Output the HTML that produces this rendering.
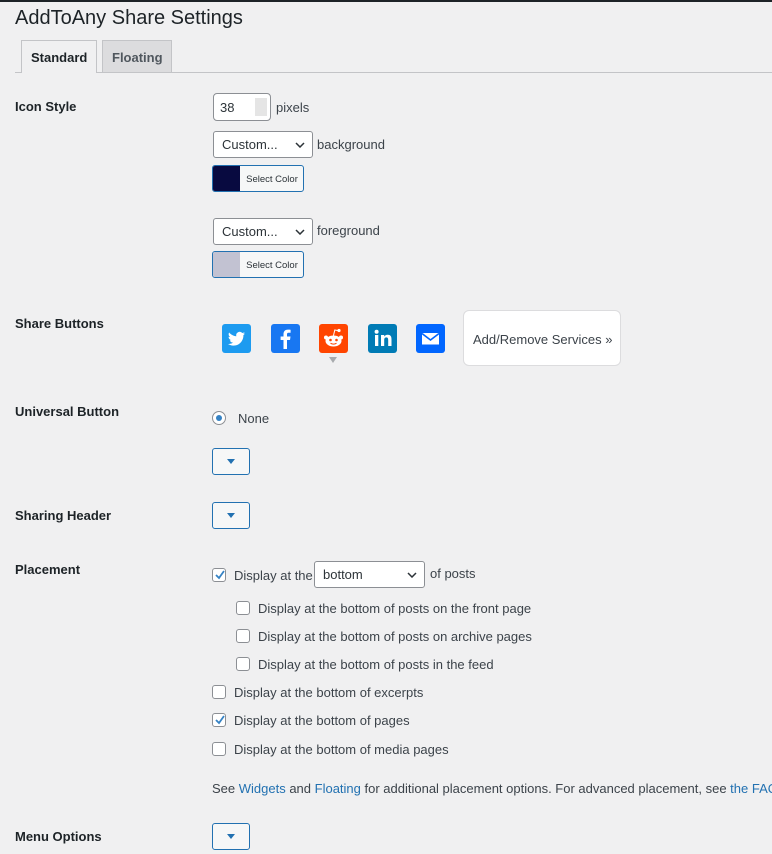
<!DOCTYPE html>
<html><head><meta charset="utf-8"><style>
*{box-sizing:border-box;margin:0;padding:0}
body{width:772px;height:854px;background:#f0f0f1;font-family:"Liberation Sans",sans-serif;color:#3c434a;font-size:13px;position:relative;overflow:hidden}
.a{position:absolute}
.t{position:absolute;font-size:13px;line-height:16px;white-space:nowrap;color:#3c434a;margin-top:1px}
.l{position:absolute;font-size:13px;line-height:16px;font-weight:bold;color:#1d2327;white-space:nowrap;margin-top:1px}
.sel{position:absolute;background:#fff;border:1px solid #8c8f94;border-radius:3px;font-size:13px;line-height:26px;padding-left:8px;color:#2c3338}
.sel svg{position:absolute;right:7px;top:10px}
.cb{position:absolute;width:14px;height:14px;border:1px solid #8c8f94;border-radius:3px;background:#fff}
.cbtn{position:absolute;width:92px;height:27px;border:1px solid #2271b1;border-radius:3px;background:#f6f7f7;overflow:hidden}
.cbtn span{position:absolute;left:28px;top:1px;width:62px;text-align:center;font-size:9.5px;line-height:25px;color:#2c3338}
.dd{position:absolute;width:38px;height:27px;border:1px solid #2271b1;border-radius:3px;background:#f6f7f7}
.dd:after{content:"";position:absolute;left:14px;top:10px;border-left:4px solid transparent;border-right:4px solid transparent;border-top:5px solid #2271b1}
.ic{position:absolute;top:324px;width:29px;height:29px;border-radius:3px}
a{color:#2271b1}
</style></head><body>
<div class="a" style="left:0;top:0;width:772px;height:2px;background:#1d2327"></div>
<div class="t" style="left:15px;top:5px;font-size:20px;line-height:24px;color:#1d2327">AddToAny Share Settings</div>
<div class="a" style="left:15px;top:72px;width:757px;height:1px;background:#c3c4c7"></div>
<div class="a" style="left:21px;top:40px;width:76px;height:33px;border:1px solid #c3c4c7;border-bottom:none;background:#f0f0f1"></div>
<div class="t" style="left:31px;top:49px;color:#1d2327;font-weight:bold">Standard</div>
<div class="a" style="left:102px;top:40px;width:70px;height:32px;border:1px solid #c3c4c7;border-bottom:none;background:#dcdcde"></div>
<div class="t" style="left:112px;top:49px;color:#50575e;font-weight:bold">Floating</div>

<div class="l" style="left:15px;top:98px">Icon Style</div>
<div class="a" style="left:213px;top:93px;width:58px;height:28px;background:#fff;border:1px solid #8c8f94;border-radius:4px"></div>
<div class="t" style="left:220px;top:99px;color:#2c3338">38</div>
<div class="a" style="left:255px;top:98px;width:12px;height:18px;background:#e5e5e5"></div>
<div class="t" style="left:276px;top:99px">pixels</div>
<div class="sel" style="left:213px;top:131px;width:100px;height:27px">Custom...<svg width="10" height="6"><path d="M1 1l4 4 4-4" stroke="#2c3338" stroke-width="1.5" fill="none"/></svg></div>
<div class="t" style="left:317px;top:136px">background</div>
<div class="cbtn" style="left:212px;top:165px"><div class="a" style="left:0;top:0;width:27px;height:27px;background:#080a40"></div><span>Select Color</span></div>
<div class="sel" style="left:213px;top:218px;width:100px;height:27px">Custom...<svg width="10" height="6"><path d="M1 1l4 4 4-4" stroke="#2c3338" stroke-width="1.5" fill="none"/></svg></div>
<div class="t" style="left:317px;top:222px">foreground</div>
<div class="cbtn" style="left:212px;top:251px"><div class="a" style="left:0;top:0;width:27px;height:27px;background:#c2c2d2"></div><span>Select Color</span></div>

<div class="l" style="left:15px;top:315px">Share Buttons</div>
<div class="ic" style="left:222px;background:#1d9bf0"><svg width="29" height="29" viewBox="0 0 29 29"><path d="M23 9.5c-.6.3-1.3.5-2 .6.7-.4 1.3-1.1 1.5-1.9-.7.4-1.4.7-2.2.8a3.5 3.5 0 0 0-6 3.2C11.4 12 8.8 10.6 7.1 8.5c-.9 1.6-.4 3.6 1.1 4.6-.6 0-1.1-.2-1.6-.4 0 1.7 1.2 3.1 2.8 3.4-.5.1-1.1.2-1.6.1.4 1.4 1.7 2.4 3.3 2.4A7 7 0 0 1 6 20c1.6 1 3.4 1.6 5.4 1.6 6.5 0 10.2-5.5 10-10.5.7-.5 1.2-1 1.6-1.6z" fill="#fff"/></svg></div>
<div class="ic" style="left:271px;background:#1877f2"><svg width="29" height="29" viewBox="0 0 29 29"><path d="M16 25v-9h3l.5-3.5H16v-2c0-1 .3-1.7 1.8-1.7h1.8V5.7c-.3 0-1.4-.1-2.7-.1-2.6 0-4.4 1.6-4.4 4.5v2.4H9.6V16h2.9v9z" fill="#fff"/></svg></div>
<div class="ic" style="left:319px;background:#ff4500"><svg width="29" height="29" viewBox="0 0 29 29"><ellipse cx="14.5" cy="17" rx="8" ry="5.5" fill="#fff"/><circle cx="22" cy="13.5" r="2" fill="#fff"/><circle cx="7" cy="13.5" r="2" fill="#fff"/><circle cx="20" cy="6.5" r="1.6" fill="#fff"/><path d="M14.5 11.5l1.3-5.5 4 .8" stroke="#fff" stroke-width="1" fill="none"/><circle cx="11.5" cy="16" r="1.3" fill="#ff4500"/><circle cx="17.5" cy="16" r="1.3" fill="#ff4500"/><path d="M11.5 19.2c1.7 1.2 4.3 1.2 6 0" stroke="#ff4500" stroke-width="1" fill="none"/></svg></div>
<div class="a" style="left:329px;top:357px;border-left:4px solid transparent;border-right:4px solid transparent;border-top:6px solid #a7aaad"></div>
<div class="ic" style="left:368px;background:#007bb5"><svg width="29" height="29" viewBox="0 0 29 29"><rect x="7" y="11" width="3.3" height="11" fill="#fff"/><circle cx="8.6" cy="7.8" r="2" fill="#fff"/><path d="M13 11h3.2v1.6c.5-1 1.7-1.9 3.5-1.9 3.3 0 3.8 2.2 3.8 5V22h-3.3v-5.6c0-1.4-.1-3-1.9-3s-2.1 1.4-2.1 2.9V22H13z" fill="#fff"/></svg></div>
<div class="ic" style="left:416px;background:#0166ff"><svg width="29" height="29" viewBox="0 0 29 29"><rect x="6" y="9" width="17" height="11.5" fill="#fff"/><path d="M6 9.5l8.5 6.5 8.5-6.5" stroke="#0166ff" stroke-width="1.6" fill="none"/></svg></div>
<div class="a" style="left:463px;top:310px;width:158px;height:56px;background:#fff;border:1px solid #dcdcde;border-radius:6px"></div>
<div class="t" style="left:473px;top:331px">Add/Remove Services »</div>

<div class="l" style="left:15px;top:403px">Universal Button</div>
<div class="a" style="left:212px;top:411px;width:14px;height:14px;border:1px solid #8c8f94;border-radius:50%;background:#fff"><div class="a" style="left:3px;top:3px;width:6px;height:6px;border-radius:50%;background:#3582c4"></div></div>
<div class="t" style="left:238px;top:410px">None</div>
<div class="dd" style="left:212px;top:448px"></div>
<div class="l" style="left:15px;top:507px">Sharing Header</div>
<div class="dd" style="left:212px;top:502px"></div>

<div class="l" style="left:15px;top:561px">Placement</div>
<div class="cb" style="left:212px;top:568px"><svg class="a" style="left:1px;top:0" width="12" height="12"><path d="M2 6l3 3 5-7" stroke="#3582c4" stroke-width="1.8" fill="none"/></svg></div>
<div class="t" style="left:234px;top:567px">Display at the</div>
<div class="sel" style="left:314px;top:561px;width:111px;height:27px">bottom<svg width="10" height="6"><path d="M1 1l4 4 4-4" stroke="#2c3338" stroke-width="1.5" fill="none"/></svg></div>
<div class="t" style="left:430px;top:565px">of posts</div>
<div class="cb" style="left:236px;top:601px"></div><div class="t" style="left:258px;top:600px">Display at the bottom of posts on the front page</div>
<div class="cb" style="left:236px;top:629px"></div><div class="t" style="left:258px;top:628px">Display at the bottom of posts on archive pages</div>
<div class="cb" style="left:236px;top:657px"></div><div class="t" style="left:258px;top:656px">Display at the bottom of posts in the feed</div>
<div class="cb" style="left:212px;top:685px"></div><div class="t" style="left:234px;top:684px">Display at the bottom of excerpts</div>
<div class="cb" style="left:212px;top:713px"><svg class="a" style="left:1px;top:0" width="12" height="12"><path d="M2 6l3 3 5-7" stroke="#3582c4" stroke-width="1.8" fill="none"/></svg></div><div class="t" style="left:234px;top:712px">Display at the bottom of pages</div>
<div class="cb" style="left:212px;top:742px"></div><div class="t" style="left:234px;top:741px">Display at the bottom of media pages</div>
<div class="t" style="left:212px;top:780px">See <a>Widgets</a> and <a>Floating</a> for additional placement options. For advanced placement, see <a>the FAQs</a></div>

<div class="l" style="left:15px;top:828px">Menu Options</div>
<div class="dd" style="left:212px;top:823px"></div>
</body></html>
